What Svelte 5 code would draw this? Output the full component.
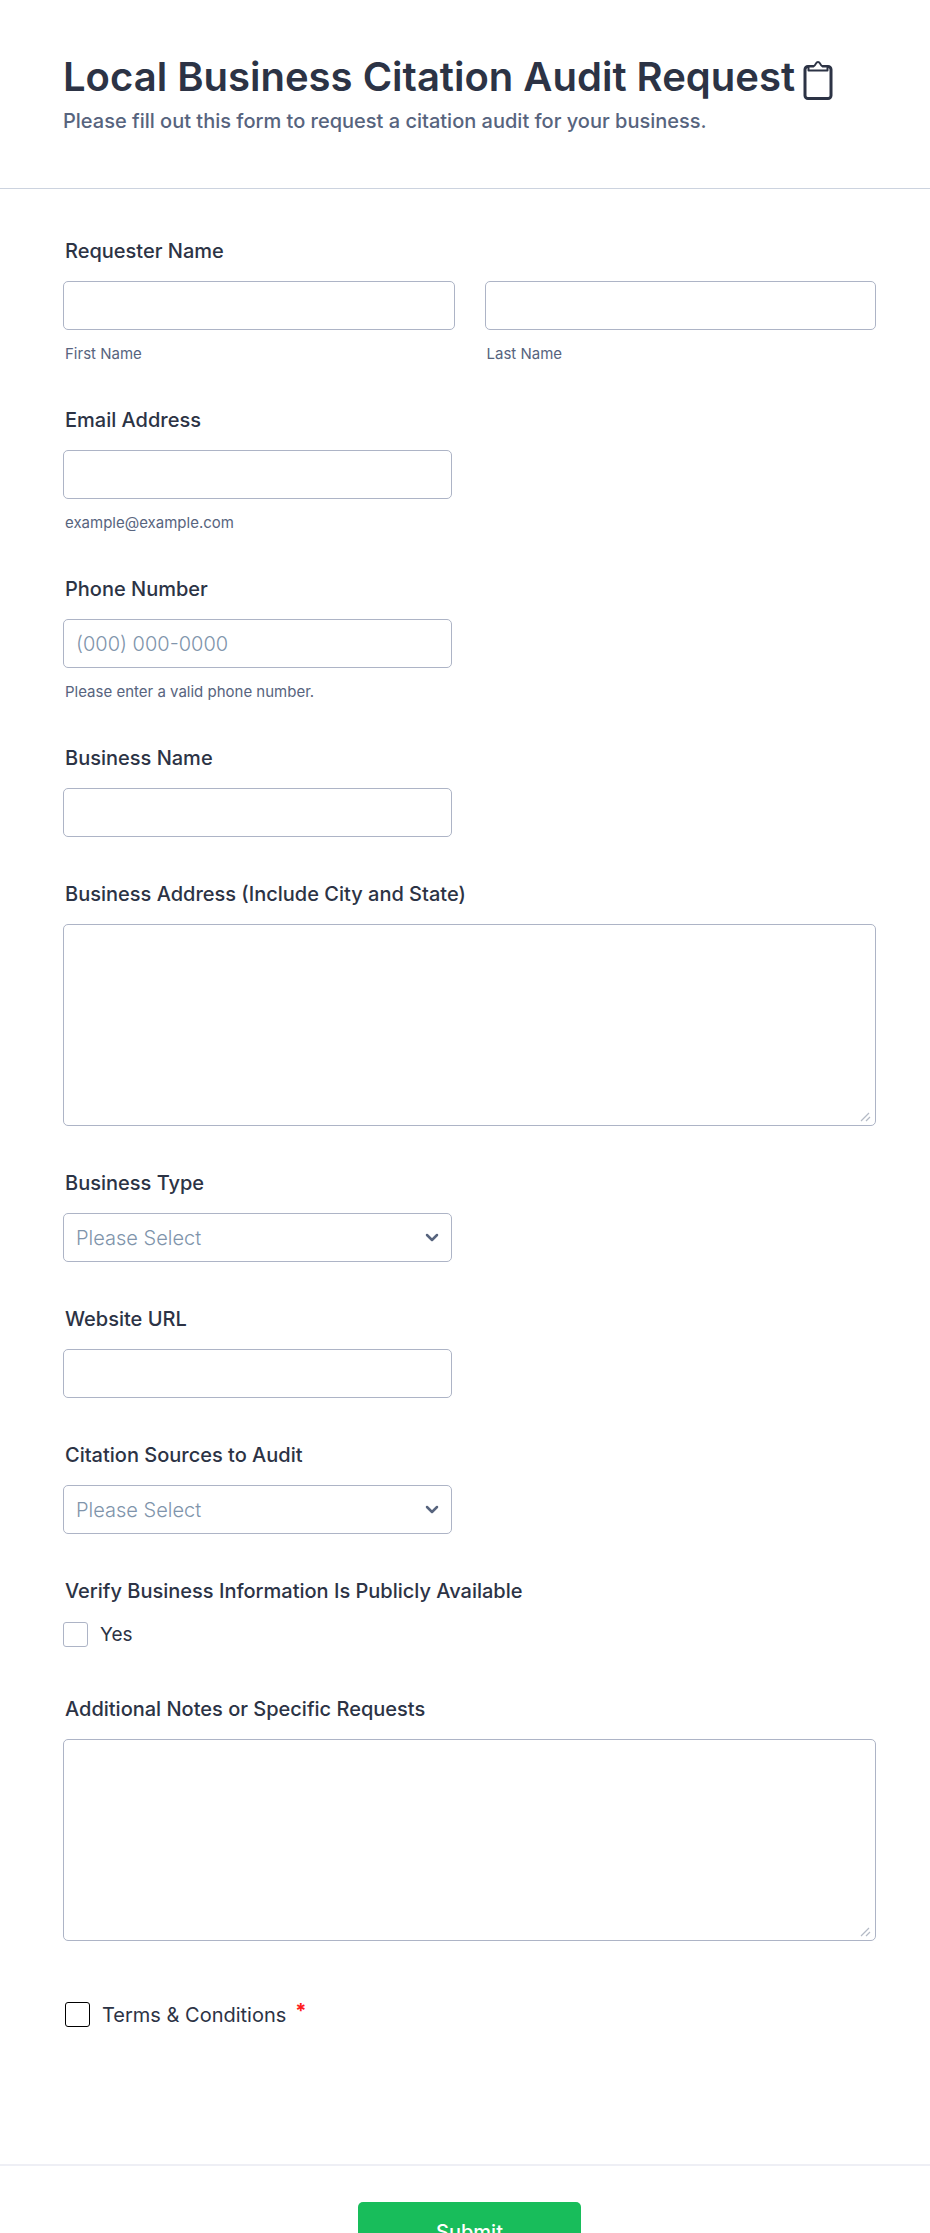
<script>
    let businessType = "";
    let citationSource = "";

    const businessTypes = ["Retail", "Restaurant", "Professional Services", "Other"];
    const citationSources = ["Google Business Profile", "Yelp", "Bing Places", "Other"];
</script>

<form class="form" on:submit|preventDefault>
    <header class="header">
        <h1>
            Local Business Citation Audit Request
            <svg class="clipboard" viewBox="0 0 30 40" aria-hidden="true">
                <rect x="2" y="6.5" width="26" height="32" rx="3" />
                <path class="clip" d="M5.5 10.5v-4h4.8c1.6-.6 2.2-2 2.9-3.4.8-1.6 2.8-1.6 3.6 0 .7 1.4 1.3 2.8 2.9 3.4h4.8v4z" />
            </svg>
        </h1>
        <p>Please fill out this form to request a citation audit for your business.</p>
    </header>

    <div class="fields">
        <fieldset class="field">
            <legend class="label">Requester Name</legend>
            <div class="columns">
                <div class="column">
                    <input class="control" id="first-name" type="text" />
                    <label class="caption" for="first-name">First Name</label>
                </div>
                <div class="column">
                    <input class="control" id="last-name" type="text" />
                    <label class="caption" for="last-name">Last Name</label>
                </div>
            </div>
        </fieldset>

        <div class="field">
            <label class="label" for="email">Email Address</label>
            <input class="control short" id="email" type="email" aria-describedby="email-hint" />
            <span class="caption" id="email-hint">example@example.com</span>
        </div>

        <div class="field">
            <label class="label" for="phone">Phone Number</label>
            <input class="control short" id="phone" type="tel" placeholder="(000) 000-0000" aria-describedby="phone-hint" />
            <span class="caption" id="phone-hint">Please enter a valid phone number.</span>
        </div>

        <div class="field">
            <label class="label" for="business-name">Business Name</label>
            <input class="control short" id="business-name" type="text" />
        </div>

        <div class="field">
            <label class="label" for="address">Business Address (Include City and State)</label>
            <textarea class="control" id="address"></textarea>
        </div>

        <div class="field">
            <label class="label" for="business-type">Business Type</label>
            <div class="select short">
                <select class="control" class:empty={!businessType} id="business-type" bind:value={businessType}>
                    <option value="">Please Select</option>
                    {#each businessTypes as type}
                        <option value={type}>{type}</option>
                    {/each}
                </select>
                <svg class="chevron" viewBox="0 0 14 9" aria-hidden="true"><path d="M2 2l5 5 5-5" /></svg>
            </div>
        </div>

        <div class="field">
            <label class="label" for="website">Website URL</label>
            <input class="control short" id="website" type="url" />
        </div>

        <div class="field">
            <label class="label" for="sources">Citation Sources to Audit</label>
            <div class="select short">
                <select class="control" class:empty={!citationSource} id="sources" bind:value={citationSource}>
                    <option value="">Please Select</option>
                    {#each citationSources as source}
                        <option value={source}>{source}</option>
                    {/each}
                </select>
                <svg class="chevron" viewBox="0 0 14 9" aria-hidden="true"><path d="M2 2l5 5 5-5" /></svg>
            </div>
        </div>

        <fieldset class="field">
            <legend class="label">Verify Business Information Is Publicly Available</legend>
            <label class="check">
                <input type="checkbox" />
                <span>Yes</span>
            </label>
        </fieldset>

        <div class="field">
            <label class="label" for="notes">Additional Notes or Specific Requests</label>
            <textarea class="control" id="notes"></textarea>
        </div>

        <div class="terms">
            <label class="check">
                <input type="checkbox" required />
                <span>Terms &amp; Conditions</span>
                <span class="required">*</span>
            </label>
        </div>
    </div>

    <footer class="footer">
        <button class="submit" type="submit">Submit</button>
    </footer>
</form>

<style>
    :global(body)
    {
        margin: 0;
        background: #fff;
    }

    .form,
    .form *
    {
        box-sizing: border-box;
    }

    .form
    {
        font-family: Inter, "Liberation Sans", sans-serif;
        font-size: 20px;
        line-height: 24px;
        color: #2c3345;
    }

    .header
    {
        padding: 53px 54px 55px 63px;
        border-bottom: 1px solid #ccd3df;
    }

    h1
    {
        display: flex;
        align-items: center;
        gap: 8px;
        margin: 0 0 8px;
        font-size: 40px;
        line-height: 48px;
        font-weight: 600;
    }

    .clipboard
    {
        flex: none;
        width: 30px;
        height: 40px;
        margin-top: 6px;
        fill: none;
        stroke: #2c3345;
        stroke-width: 3;
        stroke-linejoin: round;
    }

    .clipboard .clip
    {
        fill: #fff;
        stroke-width: 2;
    }

    .header p
    {
        margin: 0;
        font-weight: 500;
        color: #57647e;
    }

    .fields
    {
        display: flex;
        flex-direction: column;
        gap: 45px;
        padding: 50px 54px 132px 63px;
    }

    .field
    {
        display: flex;
        flex-direction: column;
        min-width: 0;
        margin: 0;
        padding: 0;
        border: 0;
    }

    .label
    {
        margin-bottom: 18px;
        padding: 0 0 0 2px;
        font-weight: 500;
    }

    .control
    {
        display: block;
        width: 100%;
        height: 49px;
        padding: 0 12px;
        border: 1px solid #adb4c6;
        border-radius: 5px;
        background: #fff;
        font: inherit;
        color: inherit;
    }

    .control::placeholder
    {
        font-weight: 300;
        color: #8094ab;
        opacity: 1;
    }

    textarea.control
    {
        height: 202px;
        padding: 12px;
        resize: vertical;
    }

    textarea::-webkit-resizer
    {
        background: url("data:image/svg+xml,%3Csvg xmlns='http://www.w3.org/2000/svg' width='15' height='15'%3E%3Cpath d='M1 11l8-8M6 11l4-4' fill='none' stroke='%23b4bac6' stroke-width='1.2'/%3E%3C/svg%3E") no-repeat;
    }

    .short
    {
        width: 100%;
        max-width: 389px;
    }

    .caption
    {
        display: block;
        margin-top: 14px;
        padding-left: 2px;
        font-size: 15px;
        line-height: 19px;
        color: #57647e;
    }

    .columns
    {
        display: flex;
        gap: 30px;
    }

    .column
    {
        flex: 1;
        min-width: 0;
    }

    .select
    {
        position: relative;
    }

    select.control
    {
        appearance: none;
        padding-right: 40px;
    }

    select.empty
    {
        font-weight: 300;
        color: #8094ab;
    }

    .chevron
    {
        position: absolute;
        top: 20px;
        right: 13px;
        width: 14px;
        height: 9px;
        fill: none;
        stroke: #57647e;
        stroke-width: 2.5;
        stroke-linecap: round;
        stroke-linejoin: round;
        pointer-events: none;
    }

    .check
    {
        display: flex;
        align-items: center;
        gap: 12px;
        height: 27px;
        margin-bottom: 4px;
        font-size: 19px;
    }

    .check input
    {
        appearance: none;
        flex: none;
        width: 25px;
        height: 25px;
        margin: 0;
        border: 1px solid #adb4c6;
        border-radius: 3px;
        background: #fff;
    }

    .check input:checked
    {
        background: #18bd5b;
    }

    .terms
    {
        padding: 15px 0 0 2px;
    }

    .terms .check
    {
        font-size: 20px;
    }

    .terms input
    {
        border-color: #000;
    }

    .required
    {
        align-self: flex-start;
        margin-left: -3px;
        line-height: 20px;
        font-weight: 700;
        color: #ff1c1c;
    }

    .footer
    {
        display: flex;
        justify-content: center;
        padding: 36px 54px 36px 63px;
        border-top: 2px solid #eeeff5;
    }

    .submit
    {
        width: 223px;
        height: 60px;
        padding: 0;
        border: 0;
        border-radius: 5px;
        background: #18bd5b;
        font: inherit;
        font-weight: 500;
        color: #fff;
        cursor: pointer;
    }
</style>
